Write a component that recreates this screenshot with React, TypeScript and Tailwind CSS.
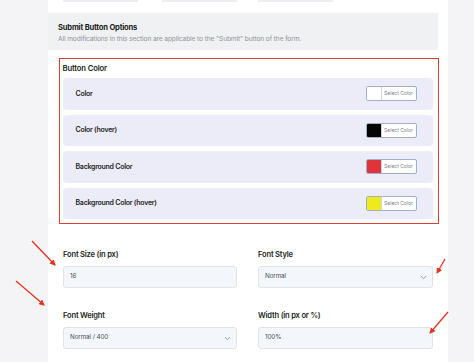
import React from "react";

const rows = [
  { label: "Color", swatch: "#ffffff" },
  { label: "Color (hover)", swatch: "#050505" },
  { label: "Background Color", swatch: "#e0333a" },
  { label: "Background Color (hover)", swatch: "#ecec1c" },
];

function Picker({ swatch }: { swatch: string }) {
  return (
    <div className="flex h-[15px] w-[51px] items-stretch overflow-hidden rounded-[2px] border border-[#9fb0c8] bg-white">
      <div className="w-[14px]" style={{ backgroundColor: swatch }} />
      <div className="flex flex-1 items-center justify-center border-l border-[#cfd6e0] text-[5px] text-[#7a7f88]">
        Select Color
      </div>
    </div>
  );
}

function Chevron() {
  return (
    <svg width="7" height="5" viewBox="0 0 7 5" fill="none">
      <path d="M1 1.2 L3.5 3.6 L6 1.2" stroke="#8b9099" strokeWidth="0.9" />
    </svg>
  );
}

const labelCls = "mb-[5px] text-[7.6px] font-semibold leading-[12px] tracking-[-0.2px] text-[#1d1f24]";
const inputCls = "flex h-[22px] items-center rounded-[3px] border border-[#dfe3ea] bg-[#f3f6fb] pl-[6px] text-[6.3px] tracking-[-0.1px] text-[#4a4e55]";

export default function App() {
  return (
    <div
      className="relative flex h-[362px] w-[474px] overflow-hidden bg-[#f4f4f6] pl-[48px] pr-[26px]"
      style={{ fontFamily: "Inter, 'Noto Sans', sans-serif" }}
    >
      <div className="relative flex w-[400px] flex-col bg-white">
        <div className="flex h-[13px] items-start">
          <div className="ml-[15px] h-[2px] w-[75px] bg-[#eceef1]" />
          <div className="ml-[24px] h-[2px] w-[75px] bg-[#eceef1]" />
          <div className="ml-[21px] h-[2px] w-[75px] bg-[#eceef1]" />
        </div>
        <div className="flex h-[37px] w-[390px] flex-col justify-center bg-[#f0f1f3] pl-[10px] pt-[2px]">
          <div className="text-[7.6px] font-bold leading-[12px] tracking-[-0.2px] text-[#1d1f24]">Submit Button Options</div>
          <div className="text-[6.6px] leading-[10px] tracking-[-0.1px] text-[#8e939b]">
            All modifications in this section are applicable to the "Submit" button of the form.
          </div>
        </div>
        <div className="ml-[11px] mt-[8px] flex h-[166px] w-[380px] flex-col border-[1.5px] border-[#e2412f] pl-[2.5px] pr-[5.5px]">
          <div className="flex h-[19px] items-center text-[7.7px] font-semibold tracking-[-0.15px] text-[#1d1f24]">Button Color</div>
          <div className="flex flex-col gap-[5px]">
            {rows.map((r) => (
              <div
                key={r.label}
                className="flex h-[31.5px] items-center justify-between rounded-[4px] bg-[#ecebf8] pl-[13px] pr-[16px]"
              >
                <span className="text-[7px] font-semibold tracking-[-0.25px] text-[#1d1f24]">{r.label}</span>
                <Picker swatch={r.swatch} />
              </div>
            ))}
          </div>
        </div>
        <div className="ml-[15px] mt-[25px] grid w-[370px] grid-cols-[174px_175px] gap-x-[21px] gap-y-[22px]">
          <div className="flex flex-col">
            <div className={labelCls}>Font Size (in px)</div>
            <div className={inputCls}>16</div>
          </div>
          <div className="flex flex-col">
            <div className={labelCls}>Font Style</div>
            <div className={inputCls + " justify-between pr-[5px]"}>
              <span>Normal</span>
              <Chevron />
            </div>
          </div>
          <div className="flex flex-col">
            <div className={labelCls}>Font Weight</div>
            <div className={inputCls + " justify-between pr-[5px]"}>
              <span>Normal / 400</span>
              <Chevron />
            </div>
          </div>
          <div className="flex flex-col">
            <div className={labelCls}>Width (in px or %)</div>
            <div className={inputCls}>100%</div>
          </div>
        </div>
      </div>
      <svg className="pointer-events-none absolute left-0 top-0" width="474" height="362" viewBox="0 0 474 362">
        <defs>
          <marker id="ah" markerWidth="6" markerHeight="6" refX="5" refY="3" orient="auto" markerUnits="userSpaceOnUse">
            <path d="M0 0 L6 3 L0 6 Z" fill="#e8321f" />
          </marker>
        </defs>
        <line x1="32" y1="241" x2="55" y2="265" stroke="#e8321f" strokeWidth="1.3" markerEnd="url(#ah)" />
        <line x1="16" y1="281" x2="44" y2="305" stroke="#e8321f" strokeWidth="1.3" markerEnd="url(#ah)" />
        <line x1="445" y1="259" x2="437" y2="273" stroke="#e8321f" strokeWidth="1.3" markerEnd="url(#ah)" />
        <line x1="448" y1="312" x2="430" y2="333" stroke="#e8321f" strokeWidth="1.3" markerEnd="url(#ah)" />
      </svg>
    </div>
  );
}
